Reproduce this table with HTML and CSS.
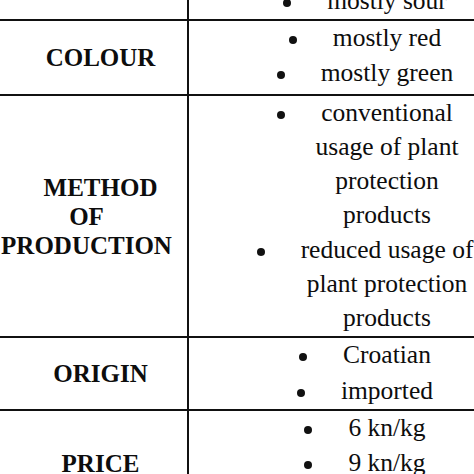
FILE: index.html
```html
<!DOCTYPE html>
<html>
<head>
<meta charset="utf-8">
<title>Attributes</title>
<link rel="stylesheet" href="styles.css">
</head>
<body>
<div class="sheet">
  <div class="label"><span class="label-line">TASTE</span></div>
  <ul class="values">
    <li class="value">mostly sweet</li>
    <li class="value">mostly sour</li>
  </ul>

  <div class="label"><span class="label-line">COLOUR</span></div>
  <ul class="values values--roomy">
    <li class="value">mostly red</li>
    <li class="value">mostly green</li>
  </ul>

  <div class="label">
    <span class="label-line">METHOD</span>
    <span class="label-line label-line--left">OF</span>
    <span class="label-line label-line--left">PRODUCTION</span>
  </div>
  <ul class="values">
    <li class="value">conventional usage of plant protection products</li>
    <li class="value">reduced usage of plant protection products</li>
  </ul>

  <div class="label"><span class="label-line">ORIGIN</span></div>
  <ul class="values values--spaced">
    <li class="value">Croatian</li>
    <li class="value">imported</li>
  </ul>

  <div class="label"><span class="label-line">PRICE</span></div>
  <ul class="values">
    <li class="value">6 kn/kg</li>
    <li class="value">9 kn/kg</li>
    <li class="value">12 kn/kg</li>
  </ul>
</div>
</body>
</html>
```

FILE: styles.css
```css
html, body {
  margin: 0;
  padding: 0;
  overflow: hidden;
  background: #ffffff;
}

body {
  font-family: "Liberation Serif", "Times New Roman", serif;
  color: #0d0d0d;
}

.sheet {
  display: grid;
  grid-template-columns: 189px 396px;
  width: 585px;
  margin-top: -51px;
}

.label {
  box-sizing: border-box;
  border-right: 2px solid #111111;
  border-bottom: 2px solid #111111;
  display: flex;
  flex-direction: column;
  justify-content: center;
  font-weight: bold;
  font-size: 25px;
  line-height: 29px;
}

.label-line {
  display: block;
  text-align: center;
  padding-left: 14px;
}

.label-line--left {
  padding-left: 0;
  padding-right: 14px;
}

.values {
  list-style: none;
  margin: 0;
  padding: 0 0 1px;
  border-bottom: 2px solid #111111;
  font-size: 25.5px;
  line-height: 34px;
}

.values--roomy {
  padding-bottom: 4px;
}

.values--spaced .value + .value {
  margin-top: 2px;
}

.value {
  width: 184px;
  margin: 0 auto;
  text-align: center;
}

.value + .value {
  margin-top: 1px;
}

.value::before {
  content: "";
  display: inline-block;
  width: 8px;
  height: 8px;
  border-radius: 50%;
  background: #111111;
  margin-left: -44px;
  margin-right: 36px;
  vertical-align: 2.5px;
}
```
